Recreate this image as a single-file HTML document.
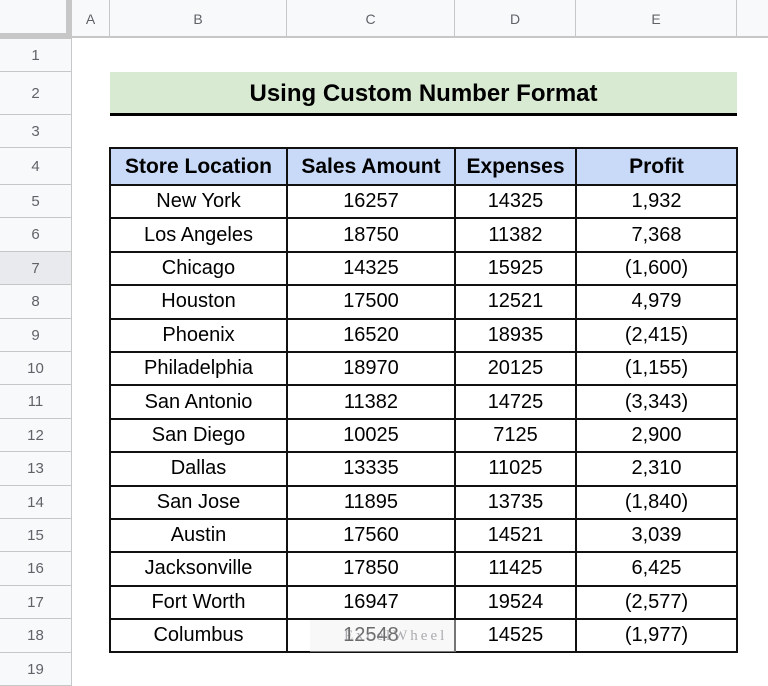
<!DOCTYPE html>
<html><head><meta charset="utf-8"><style>
body{margin:0;width:768px;height:677px;overflow:hidden;background:#fff;font-family:"Liberation Sans",Arial,sans-serif;position:relative}
.ch{position:absolute;top:0;height:38px;background:#f8f9fa;border-right:1px solid #c7c7c7;border-bottom:2px solid #c7c7c7;box-sizing:border-box;color:#5f6368;font-size:14px;text-align:center;line-height:38px}
.rh{position:absolute;left:0;width:72px;background:#f8f9fa;border-right:1px solid #c7c7c7;border-bottom:1px solid #c7c7c7;box-sizing:border-box;color:#5f6368;font-size:15px;text-align:center}
.title{position:absolute;left:110px;top:72px;width:627px;height:41px;background:#d9ead3;border-bottom:3px solid #000;font-weight:bold;font-size:24px;text-align:center;line-height:44px;color:#000}
table{position:absolute;left:109px;top:147px;border-collapse:collapse;table-layout:fixed}
td{border:2px solid #111;text-align:center;font-size:20px;color:#000;padding:0;white-space:nowrap;overflow:hidden}
tr.h td{background:#c9daf8;font-weight:bold;font-size:21px;height:35px}
tr.d td{height:31.4px}
</style></head><body>
<div class="ch" style="left:0;width:72px;border-right:6px solid #c7c7c7;border-bottom:6px solid #c7c7c7;height:39px"></div>
<div class="ch" style="left:72px;width:38px">A</div>
<div class="ch" style="left:110px;width:177px">B</div>
<div class="ch" style="left:287px;width:168px">C</div>
<div class="ch" style="left:455px;width:121px">D</div>
<div class="ch" style="left:576px;width:161px">E</div>
<div class="ch" style="left:737px;width:40px"></div>

<div class="rh" style="top:39px;height:33px;line-height:33px">1</div>
<div class="rh" style="top:72px;height:43px;line-height:43px">2</div>
<div class="rh" style="top:115px;height:33px;line-height:33px">3</div>
<div class="rh" style="top:148px;height:37px;line-height:37px">4</div>
<div class="rh" style="top:185px;height:33px;line-height:33px">5</div>
<div class="rh" style="top:218px;height:34px;line-height:34px">6</div>
<div class="rh" style="top:252px;height:33px;line-height:33px;background:#e8eaed">7</div>
<div class="rh" style="top:285px;height:34px;line-height:34px">8</div>
<div class="rh" style="top:319px;height:33px;line-height:33px">9</div>
<div class="rh" style="top:352px;height:33px;line-height:33px">10</div>
<div class="rh" style="top:385px;height:34px;line-height:34px">11</div>
<div class="rh" style="top:419px;height:33px;line-height:33px">12</div>
<div class="rh" style="top:452px;height:34px;line-height:34px">13</div>
<div class="rh" style="top:486px;height:33px;line-height:33px">14</div>
<div class="rh" style="top:519px;height:33px;line-height:33px">15</div>
<div class="rh" style="top:552px;height:34px;line-height:34px">16</div>
<div class="rh" style="top:586px;height:33px;line-height:33px">17</div>
<div class="rh" style="top:619px;height:34px;line-height:34px">18</div>
<div class="rh" style="top:653px;height:33px;line-height:33px">19</div>

<div class="title">Using Custom Number Format</div>

<table>
<colgroup><col style="width:177px"><col style="width:168px"><col style="width:121px"><col style="width:161px"></colgroup>
<tr class="h"><td>Store Location</td><td>Sales Amount</td><td>Expenses</td><td>Profit</td></tr>
<tr class="d"><td>New York</td><td>16257</td><td>14325</td><td>1,932</td></tr>
<tr class="d"><td>Los Angeles</td><td>18750</td><td>11382</td><td>7,368</td></tr>
<tr class="d"><td>Chicago</td><td>14325</td><td>15925</td><td>(1,600)</td></tr>
<tr class="d"><td>Houston</td><td>17500</td><td>12521</td><td>4,979</td></tr>
<tr class="d"><td>Phoenix</td><td>16520</td><td>18935</td><td>(2,415)</td></tr>
<tr class="d"><td>Philadelphia</td><td>18970</td><td>20125</td><td>(1,155)</td></tr>
<tr class="d"><td>San Antonio</td><td>11382</td><td>14725</td><td>(3,343)</td></tr>
<tr class="d"><td>San Diego</td><td>10025</td><td>7125</td><td>2,900</td></tr>
<tr class="d"><td>Dallas</td><td>13335</td><td>11025</td><td>2,310</td></tr>
<tr class="d"><td>San Jose</td><td>11895</td><td>13735</td><td>(1,840)</td></tr>
<tr class="d"><td>Austin</td><td>17560</td><td>14521</td><td>3,039</td></tr>
<tr class="d"><td>Jacksonville</td><td>17850</td><td>11425</td><td>6,425</td></tr>
<tr class="d"><td>Fort Worth</td><td>16947</td><td>19524</td><td>(2,577)</td></tr>
<tr class="d"><td>Columbus</td><td>12548</td><td>14525</td><td>(1,977)</td></tr>
</table>
<div style="position:absolute;left:310px;top:620px;width:146px;height:32px;background:rgba(240,240,240,0.45);font-family:'Liberation Serif',serif;font-size:15px;letter-spacing:3px;color:rgba(120,120,130,0.6);line-height:32px;padding-left:34px;box-sizing:border-box">ExcelWheel</div>
</body></html>
